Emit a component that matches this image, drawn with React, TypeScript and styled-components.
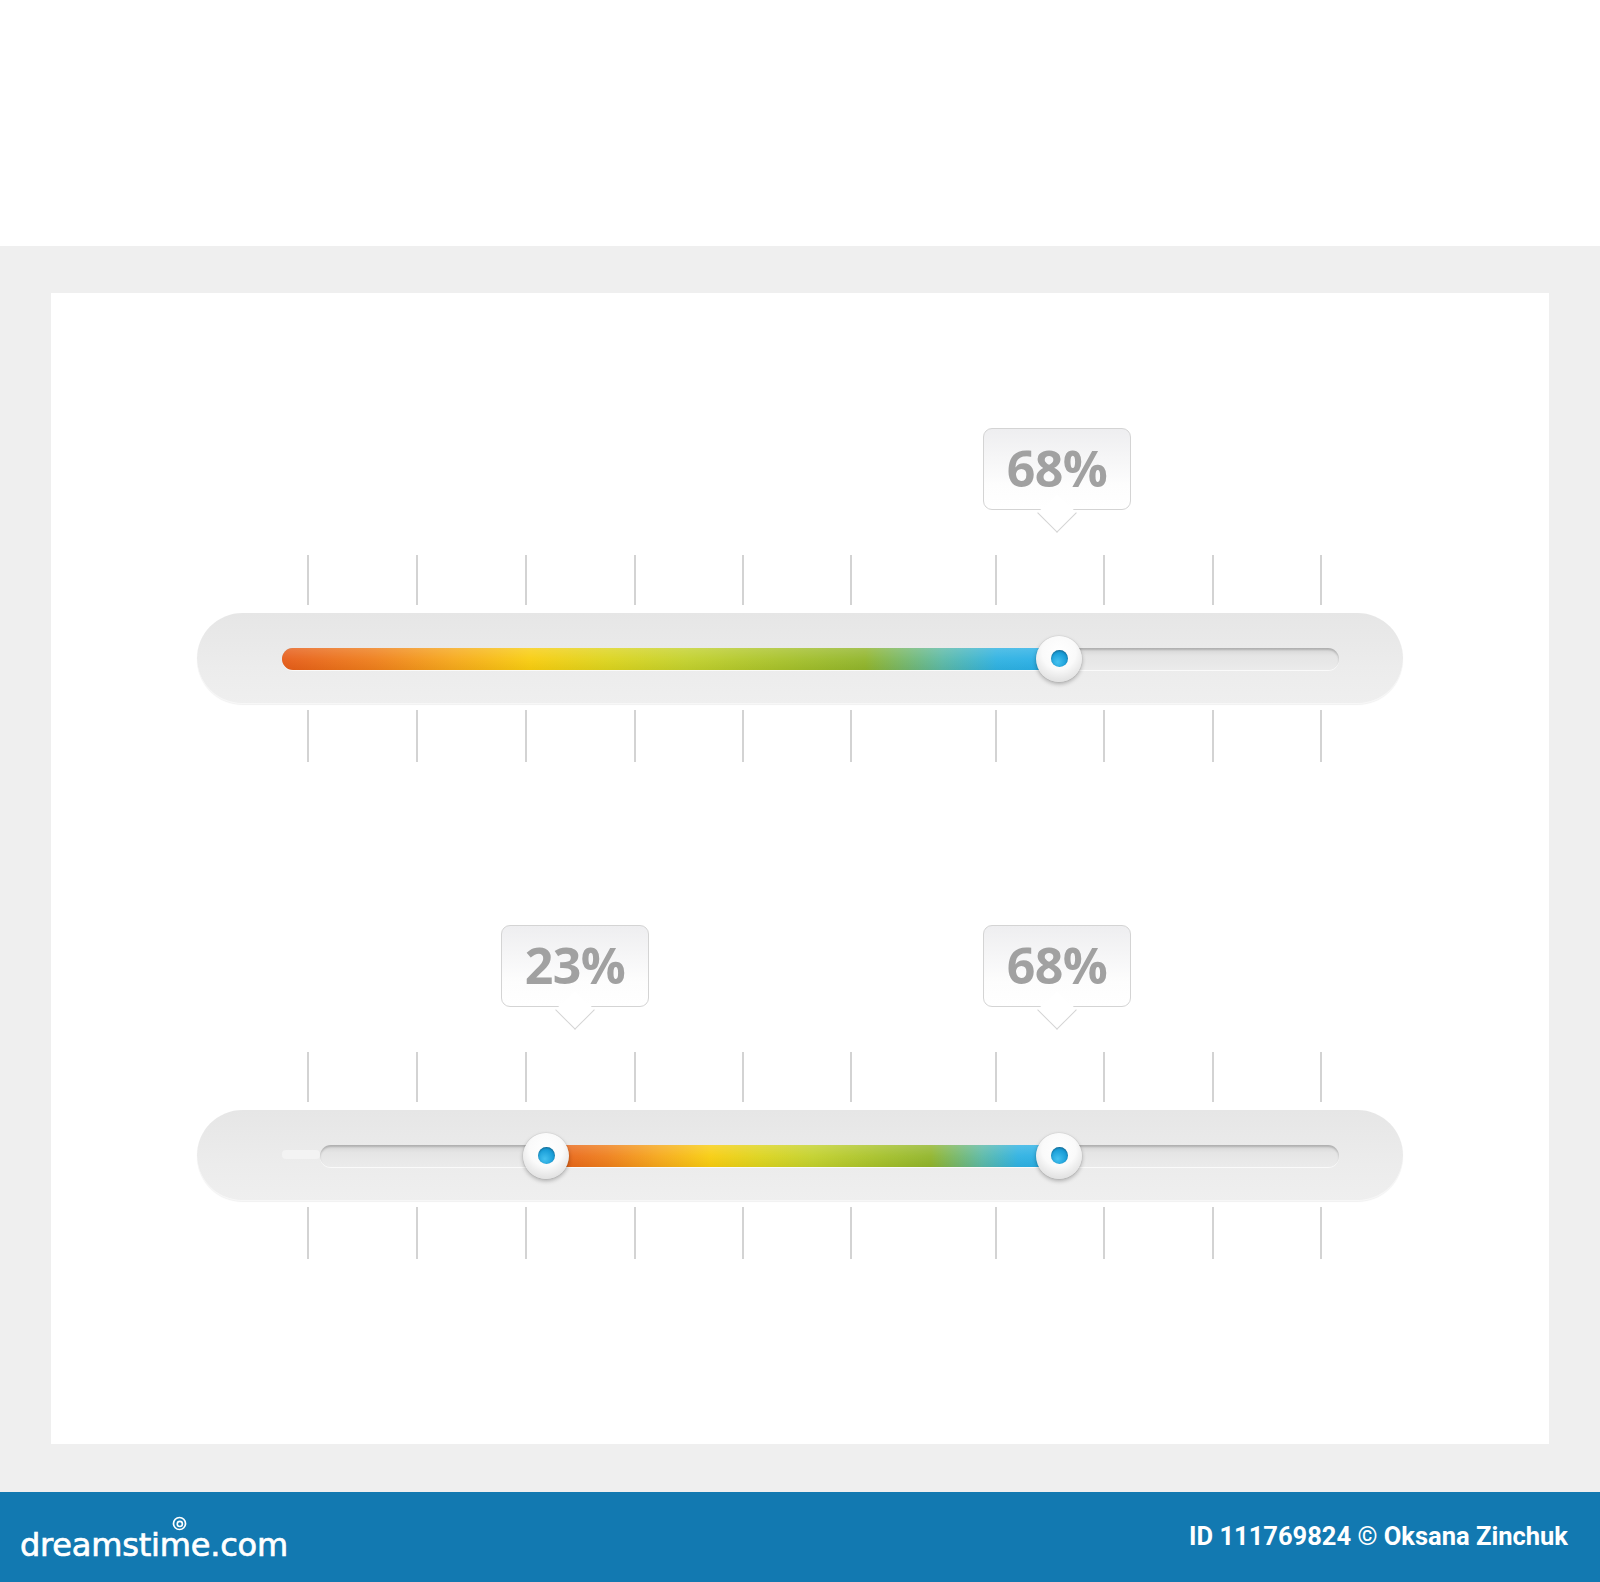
import React from "react";
import styled, { createGlobalStyle } from "styled-components";

// positions are in px from the left edge of the slider block
const TICKS = [111, 220, 329, 438, 546, 654, 799, 907, 1016, 1124];
const RAIL_START = 85; // rail offset inside the pill

type SliderSpec = {
  grooveOffset: number;
  from: number; // fill start, px from rail start
  to: number; // fill end, px from rail start
  thumbs: number[];
  bubbles: { center: number; label: string }[];
};

const sliders: SliderSpec[] = [
  {
    grooveOffset: 0,
    from: 0,
    to: 777,
    thumbs: [777],
    bubbles: [{ center: 860, label: "68%" }],
  },
  {
    grooveOffset: 38,
    from: 264,
    to: 777,
    thumbs: [264, 777],
    bubbles: [
      { center: 378, label: "23%" },
      { center: 860, label: "68%" },
    ],
  },
];

const Slider = ({ spec }: { spec: SliderSpec }) => (
  <SliderBlock>
    <BubbleLane>
      {spec.bubbles.map((b) => (
        <Bubble key={b.label + b.center} style={{ left: b.center - 74 }}>
          {b.label}
          <Pointer />
        </Bubble>
      ))}
    </BubbleLane>
    <TickRow $height={50}>
      {TICKS.map((x) => (
        <Tick key={x} style={{ left: x - 1 }} />
      ))}
    </TickRow>
    <Pill>
      <Rail>
        {spec.grooveOffset > 0 && <Lead style={{ width: spec.grooveOffset }} />}
        <Groove style={{ marginLeft: spec.grooveOffset }} />
        <Fill
          style={{
            left: spec.from,
            width: spec.to - spec.from,
            backgroundSize: `${spec.to - spec.from}px 100%`,
          }}
        />
        {spec.thumbs.map((x) => (
          <Thumb key={x} style={{ left: x }}>
            <Dot />
          </Thumb>
        ))}
      </Rail>
    </Pill>
    <TickRow $height={52} $top={6}>
      {TICKS.map((x) => (
        <Tick key={x} style={{ left: x - 1 }} />
      ))}
    </TickRow>
  </SliderBlock>
);

export default function App() {
  return (
    <Page>
      <GlobalStyle />
      <TopSpace />
      <Frame>
        <Panel>
          {sliders.map((s, i) => (
            <Slider key={i} spec={s} />
          ))}
        </Panel>
      </Frame>
      <Footer>
        <Logo>
          dreamstime.com
          <LogoSwirl viewBox="0 0 14 14">
            <circle cx="7" cy="7" r="5.6" fill="none" stroke="#fff" strokeWidth="1.6" />
            <circle cx="7.3" cy="7.4" r="2.4" fill="none" stroke="#fff" strokeWidth="1.5" />
          </LogoSwirl>
        </Logo>
        <Credit>ID 111769824 © Oksana Zinchuk</Credit>
      </Footer>
    </Page>
  );
}

const GlobalStyle = createGlobalStyle`
  html, body {
    margin: 0;
    padding: 0;
    background: #ffffff;
  }
  body {
    font-family: "Open Sans", "Liberation Sans", sans-serif;
  }
`;
const Page = styled.div`
  width: 1600px;
  display: flex;
  flex-direction: column;
`;
const TopSpace = styled.div`
  height: 246px;
  background: #ffffff;
`;
const Frame = styled.div`
  padding: 47px 51px 48px;
  background: #efefef;
`;
const Panel = styled.div`
  height: 1151px;
  box-sizing: border-box;
  padding-top: 135px;
  display: flex;
  flex-direction: column;
  align-items: center;
  gap: 163px;
  background: #ffffff;
`;
const SliderBlock = styled.div`
  width: 1206px;
  display: flex;
  flex-direction: column;
`;
const BubbleLane = styled.div`
  position: relative;
  height: 127px;
`;
const Bubble = styled.div`
  position: absolute;
  top: 0;
  width: 148px;
  height: 82px;
  box-sizing: border-box;
  border: 1.5px solid #d4d4d4;
  border-radius: 9px;
  background: linear-gradient(#eeeef0, #fdfdfd 70%, #ffffff);
  color: #a1a1a1;
  font-family: "Open Sans", sans-serif;
  font-size: 50px;
  font-weight: 700;
  line-height: 79px;
  text-align: center;
  letter-spacing: -0.5px;
`;
const Pointer = styled.span`
  position: absolute;
  top: 70px;
  left: 50%;
  width: 28px;
  height: 28px;
  box-sizing: border-box;
  margin-left: -14px;
  border-right: 1.5px solid #d4d4d4;
  border-bottom: 1.5px solid #d4d4d4;
  background: #ffffff;
  transform: rotate(45deg);
`;
const TickRow = styled.div<{ $height: number; $top?: number }>`
  position: relative;
  height: ${(p) => p.$height}px;
  margin-top: ${(p) => p.$top ?? 0}px;
  margin-bottom: ${(p) => (p.$top ? 0 : 8)}px;
`;
const Tick = styled.span`
  position: absolute;
  top: 0;
  bottom: 0;
  width: 2px;
  background: #d3d3d3;
`;
const Pill = styled.div`
  height: 91px;
  padding: 0 64px 0 ${RAIL_START}px;
  display: flex;
  align-items: center;
  border-radius: 46px;
  background: linear-gradient(#e6e6e6, #ececec 60%, #efefef);
  box-shadow: 0 1px 1px rgba(0, 0, 0, 0.06), inset 0 -1px 0 #f7f7f7;
`;
const Rail = styled.div`
  position: relative;
  flex: 1;
  height: 22px;
  display: flex;
  align-items: center;
`;
const Lead = styled.span`
  position: absolute;
  left: 0;
  top: 5px;
  height: 9px;
  border-radius: 4px;
  background: #f3f3f3;
`;
const Groove = styled.div`
  flex: 1;
  height: 22px;
  border-radius: 11px;
  background: linear-gradient(#d4d4d4, #e5e5e5 35%, #ebebeb);
  box-shadow: inset 0 2px 2px rgba(0, 0, 0, 0.18), 0 1px 0 #fafafa;
`;
const Fill = styled.span`
  position: absolute;
  top: 0;
  height: 22px;
  border-radius: 11px;
  background-image: linear-gradient(
      rgba(255, 255, 255, 0.18),
      rgba(255, 255, 255, 0.05) 50%,
      rgba(0, 0, 0, 0.04)
    ),
    linear-gradient(
      to right,
      #e65c18 0%,
      #ef7f1b 12%,
      #f6a81a 22%,
      #f8cd0f 32%,
      #dcd41d 42%,
      #c3d12c 52%,
      #a8c22a 64%,
      #91b52b 75%,
      #5bb9a6 85%,
      #2fb2e2 92%,
      #27aee8 100%
    );
  background-repeat: no-repeat;
`;
const Thumb = styled.span`
  position: absolute;
  top: 50%;
  width: 46px;
  height: 46px;
  display: flex;
  align-items: center;
  justify-content: center;
  border-radius: 50%;
  transform: translate(-50%, -50%);
  background: radial-gradient(circle at 50% 35%, #ffffff 0%, #fafafa 45%, #e2e2e2 78%, #cccccc 100%);
  box-shadow: 0 2px 4px rgba(0, 0, 0, 0.28), 0 0 1px rgba(0, 0, 0, 0.25);
`;
const Dot = styled.span`
  width: 17px;
  height: 17px;
  border-radius: 50%;
  background: radial-gradient(circle at 40% 70%, #45c1ef 0%, #1b9fd9 55%, #1184be 100%);
  box-shadow: inset 0 1px 2px rgba(0, 0, 0, 0.3);
`;
const Footer = styled.div`
  height: 90px;
  padding: 0 32px 0 20px;
  display: flex;
  align-items: center;
  justify-content: space-between;
  background: #1279b1;
  color: #ffffff;
`;
const Logo = styled.div`
  position: relative;
  margin-top: 16px;
  font-family: "DejaVu Sans", sans-serif;
  font-size: 32px;
  font-weight: 400;
  letter-spacing: -0.2px;
  -webkit-text-stroke: 0.7px #ffffff;
`;
const LogoSwirl = styled.svg`
  position: absolute;
  left: 152px;
  top: -10px;
  width: 15px;
  height: 15px;
`;
const Credit = styled.div`
  margin-top: -2px;
  font-family: Roboto, "Liberation Sans", sans-serif;
  font-size: 25.5px;
  font-weight: 700;
`;
